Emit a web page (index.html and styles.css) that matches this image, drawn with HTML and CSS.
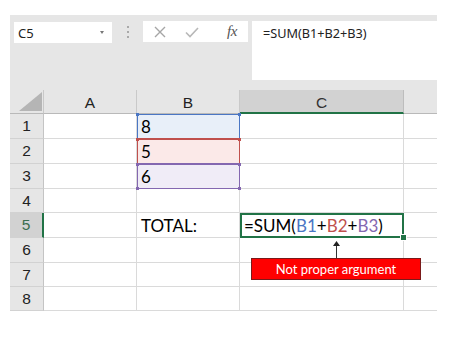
FILE: index.html
```html
<!DOCTYPE html>
<html>
<head>
<meta charset="utf-8">
<link rel="stylesheet" href="styles.css">
</head>
<body>
<div class="sheet">
  <div class="toolbar">
    <div class="namebox"><span class="nb-text">C5</span><span class="caret"></span></div>
    <div class="grip"><i></i><i></i><i></i></div>
    <div class="fxbuttons">
      <svg class="ico" width="12" height="12" viewBox="0 0 12 12"><path d="M1 1 L11 11 M11 1 L1 11" stroke="#a6a6a6" stroke-width="1.4" fill="none"/></svg>
      <svg class="ico" width="14" height="12" viewBox="0 0 14 12"><path d="M1 6.5 L5 10.5 L13 2" stroke="#b8b8b8" stroke-width="1.6" fill="none"/></svg>
      <span class="fx">fx</span>
    </div>
    <div class="formula">=SUM(B1+B2+B3)</div>
  </div>
  <div class="grid">
    <div class="corner"><svg width="23" height="19" viewBox="0 0 23 19"><polygon points="23,0 23,19 0,19" fill="#b5b5b5"/></svg></div>
    <div class="colhead">A</div>
    <div class="colhead">B</div>
    <div class="colhead sel">C</div>
    <div class="colhead last"></div>

    <div class="rowhead">1</div>
    <div class="cell"></div>
    <div class="cell ref ref-blue">8</div>
    <div class="cell"></div>
    <div class="cell last"></div>

    <div class="rowhead">2</div>
    <div class="cell"></div>
    <div class="cell ref ref-red">5</div>
    <div class="cell"></div>
    <div class="cell last"></div>

    <div class="rowhead">3</div>
    <div class="cell"></div>
    <div class="cell ref ref-purple">6</div>
    <div class="cell"></div>
    <div class="cell last"></div>

    <div class="rowhead">4</div>
    <div class="cell"></div>
    <div class="cell"></div>
    <div class="cell"></div>
    <div class="cell last"></div>

    <div class="rowhead sel">5</div>
    <div class="cell"></div>
    <div class="cell">TOTAL:</div>
    <div class="cell active">=SUM(<span class="c-blue">B1</span>+<span class="c-red">B2</span>+<span class="c-purple">B3</span>)</div>
    <div class="cell last"></div>

    <div class="rowhead">6</div>
    <div class="cell"></div>
    <div class="cell"></div>
    <div class="cell"></div>
    <div class="cell last"></div>

    <div class="rowhead">7</div>
    <div class="cell"></div>
    <div class="cell"></div>
    <div class="cell"></div>
    <div class="cell last"></div>

    <div class="rowhead">8</div>
    <div class="cell"></div>
    <div class="cell"></div>
    <div class="cell"></div>
    <div class="cell last"></div>

    <span class="knob k-blue k1l"></span>
    <span class="knob k-blue k1r"></span>
    <span class="knob k-red k2l"></span>
    <span class="knob k-red k2r"></span>
    <span class="knob k-purple k3l"></span>
    <span class="knob k-purple k3r"></span>
    <span class="knob k-purple k4l"></span>
    <span class="knob k-purple k4r"></span>
    <span class="fillhandle"></span>

    <svg class="arrow" width="9" height="18" viewBox="0 0 9 18"><path d="M4.5 4 L4.5 18" stroke="#333" stroke-width="1"/><polygon points="4.5,0 8,5 1,5" fill="#222"/></svg>
    <div class="callout">Not proper argument</div>
  </div>
</div>
</body>
</html>
```

FILE: styles.css
```css
html, body {
  margin: 0;
  padding: 0;
  background: #ffffff;
}

.sheet {
  margin: 15px 0 0 10px;
  width: 427px;
  background: #e6e6e6;
  font-family: "Liberation Sans", Arial, sans-serif;
}

.toolbar {
  display: flex;
  align-items: flex-start;
  height: 75px;
  padding: 6px 0 0 4px;
  box-sizing: border-box;
}

.namebox {
  width: 98px;
  height: 21px;
  margin-top: 1px;
  background: #ffffff;
  display: flex;
  align-items: center;
  justify-content: space-between;
  padding: 0 8px 0 4px;
  box-sizing: border-box;
}

.nb-text {
  font-family: "Noto Sans", "Open Sans", sans-serif;
  font-size: 13px;
  color: #222;
}

.caret {
  width: 0;
  height: 0;
  border-left: 2.5px solid transparent;
  border-right: 2.5px solid transparent;
  border-top: 3px solid #777;
}

.grip {
  width: 31px;
  height: 21px;
  display: flex;
  flex-direction: column;
  align-items: center;
  justify-content: center;
  gap: 3px;
}

.grip i {
  display: block;
  width: 2px;
  height: 2px;
  background: #a9a9a9;
}

.fxbuttons {
  width: 105px;
  height: 21px;
  background: #ffffff;
  display: flex;
  align-items: center;
  padding-left: 11px;
  box-sizing: border-box;
}

.fxbuttons .ico {
  margin-right: 19px;
}

.fxbuttons .ico + .ico {
  margin-right: 28px;
}

.fx {
  font-family: "Liberation Serif", "Times New Roman", serif;
  font-style: italic;
  font-size: 15px;
  color: #555;
  letter-spacing: -0.5px;
}

.formula {
  width: 185px;
  height: 59px;
  margin-left: 4px;
  background: #ffffff;
  padding: 3px 0 0 11px;
  box-sizing: border-box;
  font-family: "Noto Sans", "Open Sans", sans-serif;
  font-size: 12.7px;
  color: #222;
}

.grid {
  position: relative;
  display: grid;
  grid-template-columns: 34px 93px 103px 164px 33px;
  grid-template-rows: 24px 25px 25px 25px 24px 25px 25px 24px 24px;
}

.corner {
  display: flex;
  align-items: flex-end;
  justify-content: flex-end;
  padding: 0 1px 2px 0;
  border-bottom: 1px solid #b9b9b9;
  border-right: 1px solid #c8c8c8;
}

.colhead {
  display: flex;
  align-items: center;
  justify-content: center;
  font-size: 15.5px;
  color: #222;
  padding-top: 3px;
  border-right: 1px solid #c9c9c9;
  border-bottom: 1px solid #b9b9b9;
}

.colhead.sel {
  background: #d2d2d2;
  border-bottom: 2px solid #217346;
  border-right-color: #bdbdbd;
  color: #333;
  padding-top: 4px;
}

.colhead.last {
  border-right: none;
}

.rowhead {
  display: flex;
  align-items: center;
  justify-content: center;
  font-size: 15.5px;
  color: #222;
  border-bottom: 1px solid #d2d2d2;
  border-right: 1px solid #c4c4c4;
}

.rowhead.sel {
  background: #d2d2d2;
  border-right: 2px solid #217346;
  color: #3a6d4f;
}

.cell {
  background: #ffffff;
  border-right: 1px solid #dadada;
  border-bottom: 1px solid #dadada;
  display: flex;
  align-items: center;
  padding-left: 4px;
  padding-top: 1px;
  font-family: Lato, "Liberation Sans", sans-serif;
  font-size: 17px;
  color: #000;
  white-space: nowrap;
}

.cell.last {
  border-right: none;
}

.ref-blue {
  background: #e8eff9;
  box-shadow: inset 1px 1px 0 #4a76c4;
  border-right-color: #4a76c4;
  border-bottom-color: #c0504d;
}

.ref-red {
  background: #fbe9e8;
  box-shadow: inset 1px 1px 0 #c0504d;
  border-right-color: #c0504d;
  border-bottom-color: #8467b0;
}

.ref-purple {
  background: #f0ecf7;
  box-shadow: inset 1px 1px 0 #8467b0;
  border-right-color: #8467b0;
  border-bottom-color: #8467b0;
}

.active {
  outline: 2px solid #217346;
  outline-offset: -2px;
  position: relative;
  z-index: 1;
}

.c-blue { color: #4a76c4; }
.c-red { color: #c0504d; }
.c-purple { color: #8467b0; }

.knob {
  position: absolute;
  width: 3px;
  height: 3px;
  z-index: 2;
}

.k-blue { background: #4a76c4; }
.k-red { background: #c0504d; }
.k-purple { background: #8467b0; }

.k1l { left: 126px; top: 23px; }
.k1r { left: 228px; top: 23px; }
.k2l { left: 126px; top: 48px; }
.k2r { left: 228px; top: 48px; }
.k3l { left: 126px; top: 73px; }
.k3r { left: 228px; top: 73px; }
.k4l { left: 126px; top: 97px; }
.k4r { left: 228px; top: 97px; }

.fillhandle {
  position: absolute;
  left: 391px;
  top: 145px;
  width: 5px;
  height: 5px;
  background: #217346;
  box-shadow: 0 0 0 1px #ffffff;
  z-index: 3;
}

.arrow {
  position: absolute;
  left: 322px;
  top: 151px;
  z-index: 2;
}

.callout {
  position: absolute;
  left: 241px;
  top: 168px;
  width: 170px;
  height: 22px;
  box-sizing: border-box;
  background: #ff0000;
  border: 1px solid #7a1a1a;
  color: #ffffff;
  font-family: Lato, "Noto Sans", sans-serif;
  font-size: 13px;
  display: flex;
  align-items: center;
  justify-content: center;
  z-index: 2;
}
```
